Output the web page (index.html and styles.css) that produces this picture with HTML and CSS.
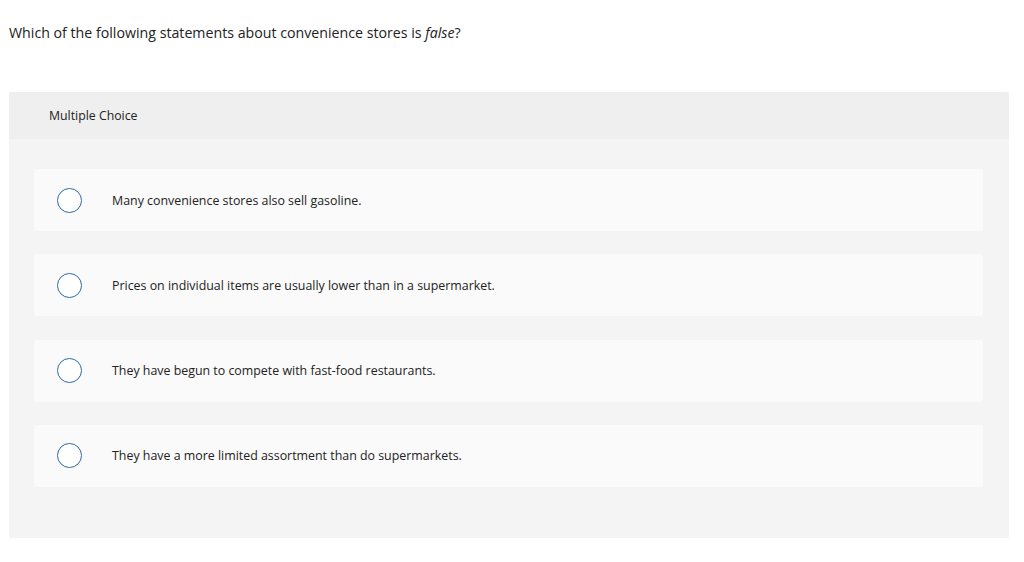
FILE: index.html
```html
<!DOCTYPE html>
<html>
<head>
<meta charset="utf-8">
<link rel="stylesheet" href="styles.css">
</head>
<body>
<div class="page">
  <p class="question">Which of the following statements about convenience stores is <em>false</em>?</p>
  <section class="mc">
    <div class="mc-head">Multiple Choice</div>
    <div class="mc-body">
      <label class="option"><span class="radio"></span><span class="opt-text">Many convenience stores also sell gasoline.</span></label>
      <label class="option"><span class="radio"></span><span class="opt-text">Prices on individual items are usually lower than in a supermarket.</span></label>
      <label class="option"><span class="radio"></span><span class="opt-text">They have begun to compete with fast-food restaurants.</span></label>
      <label class="option"><span class="radio"></span><span class="opt-text">They have a more limited assortment than do supermarkets.</span></label>
    </div>
  </section>
</div>
</body>
</html>
```

FILE: styles.css
```css
html, body {
  margin: 0;
  padding: 0;
  background: #ffffff;
}
body {
  font-family: "Open Sans", "Lato", "Liberation Sans", sans-serif;
  color: #222;
}
.page {
  padding: 0 15px 0 9px;
}
.question {
  margin: 0;
  padding-top: 24px;
  font-size: 14.2px;
  line-height: 18px;
  color: #222;
}
.question em {
  font-style: italic;
}
.mc {
  margin-top: 50px;
  width: 1000px;
  background: #f4f4f4;
  border-radius: 2px;
}
.mc-head {
  height: 47px;
  display: flex;
  align-items: center;
  padding-left: 40px;
  background: #efefef;
  font-size: 12.3px;
  color: #222;
  border-radius: 2px 2px 0 0;
}
.mc-body {
  padding: 30px 26px 51px 25px;
  display: flex;
  flex-direction: column;
  gap: 23.3px;
}
.option {
  height: 62px;
  display: flex;
  align-items: center;
  background: #fafafa;
  border-radius: 3px;
  padding-left: 23px;
}
.radio {
  width: 23px;
  height: 23px;
  border: 1.5px solid #2d6ba3;
  border-radius: 50%;
  background: #fff;
  flex: none;
}
.opt-text {
  margin-left: 30px;
  font-size: 12.4px;
  color: #222;
}
```
